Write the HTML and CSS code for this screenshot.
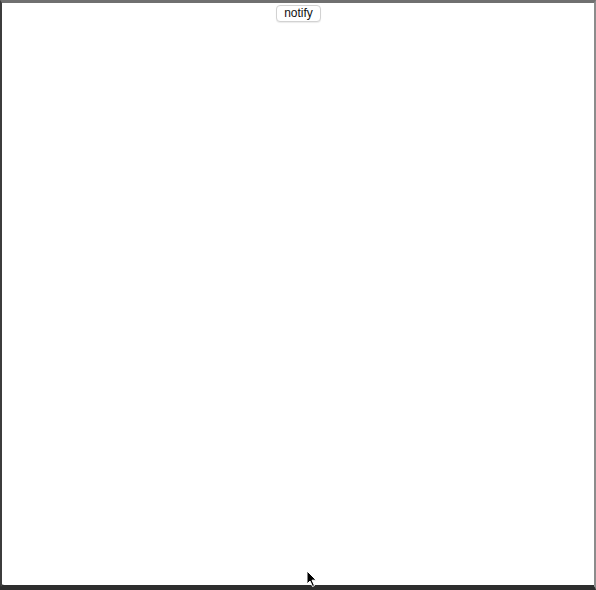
FILE: index.html
```html
<!DOCTYPE html>
<html>
<head>
<meta charset="utf-8">
<link rel="stylesheet" href="styles.css">
</head>
<body>
<div class="frame">
  <div class="toolbar">
    <button class="notify-btn">notify</button>
  </div>
</div>
<svg class="cursor" width="12" height="18" viewBox="0 0 12 18">
  <path d="M1 1 L1 14 L4 11 L6.5 16.5 L8.5 15.6 L6 10.2 L10.2 10.2 Z" fill="#000" stroke="#fff" stroke-width="1"/>
</svg>
</body>
</html>
```
FILE: styles.css
```css
html, body {
  margin: 0;
  padding: 0;
  background: #2e2e2e;
  width: 596px;
  height: 590px;
  overflow: hidden;
}
.frame {
  box-sizing: border-box;
  width: 596px;
  height: 590px;
  background: #ffffff;
  border-top: 3px solid #707070;
  border-left: 2px solid #3c3c3c;
  border-right: 2px solid #8c8c8c;
  border-bottom: 5px solid #2e2e2e;
  border-bottom-left-radius: 6px;
}
.toolbar {
  display: flex;
  justify-content: center;
  padding-top: 2px;
}
.notify-btn {
  font-family: "Liberation Sans", Arial, sans-serif;
  font-size: 12px;
  line-height: 13px;
  color: #111;
  background: #fff;
  border: 1px solid #d2d2d2;
  border-radius: 4px;
  padding: 1px 7px 1px 7px;
  margin: 0 0 0 1px;
  box-shadow: 0 1px 1px rgba(0,0,0,0.08);
}
.cursor {
  position: absolute;
  left: 306px;
  top: 570px;
}
```
